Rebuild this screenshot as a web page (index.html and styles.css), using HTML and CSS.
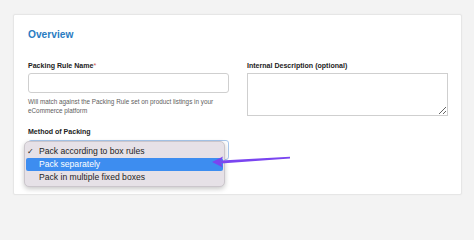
FILE: index.html
```
<!DOCTYPE html>
<html>
<head>
<meta charset="utf-8">
<link rel="stylesheet" href="styles.css">
</head>
<body>
<div class="card">
  <h2 class="title">Overview</h2>
  <div class="grid">
    <div class="col">
      <label class="label">Packing Rule Name<span class="req">*</span></label>
      <div class="input"></div>
      <p class="help">Will match against the Packing Rule set on product listings in your eCommerce platform</p>
      <label class="label method">Method of Packing</label>
      <div class="select-wrap">
        <div class="select"></div>
        <ul class="menu">
          <li class="item"><span class="check">✓</span>Pack according to box rules</li>
          <li class="item active">Pack separately</li>
          <li class="item">Pack in multiple fixed boxes</li>
        </ul>
      </div>
    </div>
    <div class="col">
      <label class="label">Internal Description (optional)</label>
      <textarea class="textarea"></textarea>
    </div>
  </div>
</div>
<svg class="arrow" width="474" height="208" viewBox="0 0 474 208">
  <polygon points="290,156.8 290,158.4 221,163.4 221,160.4" fill="#7a45f0"/>
  <polygon points="223,156.5 212,162 223,167.5 220.5,162" fill="#7a45f0"/>
</svg>
</body>
</html>
```
FILE: styles.css
```
* { box-sizing: border-box; }
html, body { margin: 0; padding: 0; }
body {
  width: 474px;
  height: 208px;
  background: #f3f3f3;
  position: relative;
  font-family: "Liberation Sans", Arial, sans-serif;
  overflow: hidden;
  padding-top: 14px;
  padding-left: 13px;
}
.card {
  width: 449px;
  height: 181px;
  background: #fff;
  border: 1px solid #e6e6e6;
  border-radius: 2px;
  box-shadow: 0 0 2px rgba(0,0,0,0.04);
  padding: 13px 14px 0 14px;
}
.title {
  margin: 0;
  font-size: 10.2px;
  line-height: 14px;
  font-weight: 700;
  color: #2a7cc2;
}
.grid {
  display: grid;
  grid-template-columns: 201px 201px;
  column-gap: 18px;
  margin-top: 19px;
}
.col { display: flex; flex-direction: column; }
.label {
  display: block;
  font-size: 7.05px;
  line-height: 10px;
  font-weight: 700;
  color: #222;
}
.req { color: #d0574f; font-weight: 400; }
.input {
  margin-top: 2px;
  height: 20px;
  border: 1px solid #cfcfcf;
  border-radius: 3px;
  background: #fff;
}
.help {
  margin: 4px 0 0 0;
  font-size: 6.35px;
  line-height: 9px;
  color: #5e5e5e;
  width: 201px;
}
.method { margin-top: 12px; }
.select-wrap { position: relative; margin-top: 3px; }
.select {
  height: 20px;
  border: 1px solid #a8c7ec;
  border-radius: 3px;
  background: #fff;
}
.menu {
  position: absolute;
  left: -4px;
  top: 1px;
  width: 201px;
  height: 46px;
  margin: 0;
  padding: 3px 1px 0 1px;
  list-style: none;
  background: #e6e1e7;
  border: 1px solid #cbc6cc;
  border-radius: 5px;
  box-shadow: 0 2px 5px rgba(0,0,0,0.22);
  font-size: 8.6px;
  color: #1e1e1e;
}
.item {
  height: 13px;
  line-height: 13px;
  padding-left: 13px;
  position: relative;
  border-radius: 2px;
}
.item.active { background: #3d8df0; color: #fff; }
.check {
  position: absolute;
  left: 1px;
  top: 0;
  font-size: 8px;
}
.textarea {
  margin-top: 2px;
  height: 43px;
  width: 201px;
  border: 1px solid #cfcfcf;
  border-radius: 0;
  background: #fff;
  padding: 0;
  display: block;
  resize: both;
}
.arrow { position: absolute; left: 0; top: 0; pointer-events: none; }
```
